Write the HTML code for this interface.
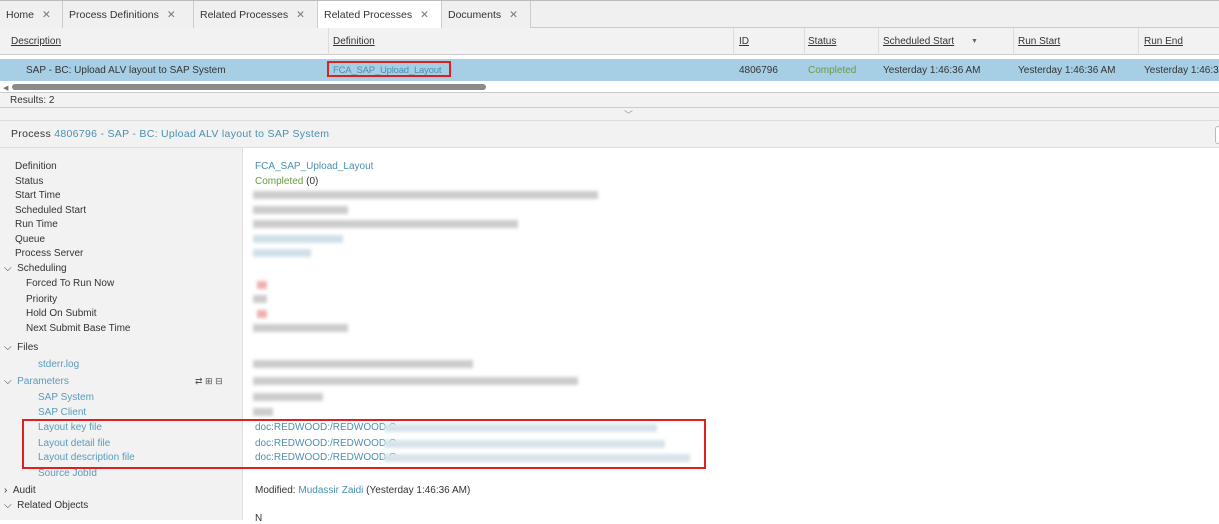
<!DOCTYPE html>
<html><head><style>
*{box-sizing:border-box;margin:0;padding:0}
body{width:1219px;height:520px;overflow:hidden;background:#fff;font-family:"Liberation Sans",sans-serif;font-size:10px;color:#333;position:relative}
.a{position:absolute;white-space:nowrap}
.tab{position:absolute;top:1px;height:27px;border-right:1px solid #ccc;background:#f0f0f0;padding:8px 6px 0 6px;font-size:10.5px;color:#333}
.tab span{margin-left:8px;color:#777}
.hd{position:absolute;top:36px;font-size:10px;text-decoration:underline;color:#333}
.lnk{color:#4a90b0}
.bl{position:absolute;height:8px;background:#ccc;filter:blur(1.5px)}
.lbl{position:absolute;left:15px;font-size:10px;color:#333}
.sub{left:26px}
.p{left:38px;color:#5a9bbd}
</style></head><body>
<div class="a" style="left:0;top:0;width:1219px;height:28px;background:#f0f0f0;border-top:1px solid #bbb;border-bottom:1px solid #ccc"></div>
<div class="tab" style="left:0;width:63px">Home<span>✕</span></div>
<div class="tab" style="left:63px;width:131px">Process Definitions<span>✕</span></div>
<div class="tab" style="left:194px;width:124px">Related Processes<span>✕</span></div>
<div class="tab" style="left:318px;width:124px;background:#fff">Related Processes<span>✕</span></div>
<div class="tab" style="left:442px;width:89px">Documents<span>✕</span></div>
<div class="a" style="left:0;top:28px;width:1219px;height:27px;background:#f2f2f2;border-bottom:1px solid #ccc"></div>
<div class="a" style="left:328px;top:28px;width:1px;height:27px;background:#ddd"></div>
<div class="a" style="left:733px;top:28px;width:1px;height:27px;background:#ddd"></div>
<div class="a" style="left:804px;top:28px;width:1px;height:27px;background:#ddd"></div>
<div class="a" style="left:878px;top:28px;width:1px;height:27px;background:#ddd"></div>
<div class="a" style="left:1013px;top:28px;width:1px;height:27px;background:#ddd"></div>
<div class="a" style="left:1138px;top:28px;width:1px;height:27px;background:#ddd"></div>
<div class="hd" style="left:11px">Description</div>
<div class="hd" style="left:333px">Definition</div>
<div class="hd" style="left:739px">ID</div>
<div class="hd" style="left:808px">Status</div>
<div class="hd" style="left:883px">Scheduled Start</div><div class="a" style="left:971px;top:38px;font-size:7px;color:#666">▼</div>
<div class="hd" style="left:1018px">Run Start</div>
<div class="hd" style="left:1144px">Run End</div>
<div class="a" style="left:0;top:59px;width:1219px;height:22px;background:#a6cfe5"></div>
<div class="a" style="left:26px;top:65px">SAP - BC: Upload ALV layout to SAP System</div>
<div class="a lnk" style="left:327px;top:61px;width:124px;height:16px;border:2px solid #e02020;padding:2px 0 0 4px;font-size:9.5px;letter-spacing:-.2px;overflow:hidden">FCA_SAP_Upload_Layout</div>
<div class="a" style="left:739px;top:65px">4806796</div>
<div class="a" style="left:808px;top:65px;color:#6a9a40">Completed</div>
<div class="a" style="left:883px;top:65px">Yesterday 1:46:36 AM</div>
<div class="a" style="left:1018px;top:65px">Yesterday 1:46:36 AM</div>
<div class="a" style="left:1144px;top:65px">Yesterday 1:46:38</div>
<div class="a" style="left:0;top:81px;width:1219px;height:12px;background:#fff;border-bottom:1px solid #ccc"></div>
<div class="a" style="left:3px;top:84px;font-size:7px;color:#777">◀</div>
<div class="a" style="left:12px;top:84px;width:474px;height:6px;background:#8a8a8a;border-radius:3px"></div>
<div class="a" style="left:0;top:93px;width:1219px;height:15px;background:#f2f2f2;border-bottom:1px solid #ccc"></div>
<div class="a" style="left:10px;top:95px">Results: 2</div>
<div class="a" style="left:0;top:108px;width:1219px;height:13px;background:#f2f2f2;border-bottom:1px solid #ddd"></div>
<div class="a" style="left:624px;top:108px;font-size:9px;color:#999">﹀</div>
<div class="a" style="left:0;top:121px;width:1219px;height:27px;background:#f2f2f2;border-bottom:1px solid #ddd"></div>
<div class="a" style="left:11px;top:128px;font-size:10.5px;letter-spacing:.3px">Process <span class="lnk">4806796 - SAP - BC: Upload ALV layout to SAP System</span></div>
<div class="a" style="left:1215px;top:126px;width:8px;height:18px;border:1px solid #bbb;border-radius:3px;background:#fff"></div>
<div class="a" style="left:0;top:148px;width:243px;height:372px;background:#f2f2f2;border-right:1px solid #ddd"></div>
<div class="lbl" style="top:161px">Definition</div>
<div class="lbl" style="top:176px">Status</div>
<div class="lbl" style="top:190px">Start Time</div>
<div class="lbl" style="top:205px">Scheduled Start</div>
<div class="lbl" style="top:219px">Run Time</div>
<div class="lbl" style="top:234px">Queue</div>
<div class="lbl" style="top:248px">Process Server</div>
<div class="lbl" style="top:263px;left:4px">⌵ &nbsp;Scheduling</div>
<div class="lbl sub" style="top:278px">Forced To Run Now</div>
<div class="lbl sub" style="top:294px">Priority</div>
<div class="lbl sub" style="top:308px">Hold On Submit</div>
<div class="lbl sub" style="top:323px">Next Submit Base Time</div>
<div class="lbl" style="top:342px;left:4px">⌵ &nbsp;Files</div>
<div class="lbl p" style="top:359px">stderr.log</div>
<div class="lbl" style="top:376px;left:4px">⌵ &nbsp;<span style="color:#5a9bbd">Parameters</span></div>
<div class="a" style="left:195px;top:376px;font-size:9px;color:#555">⇄ ⊞ ⊟</div>
<div class="lbl p" style="top:392px">SAP System</div>
<div class="lbl p" style="top:407px">SAP Client</div>
<div class="lbl p" style="top:422px">Layout key file</div>
<div class="lbl p" style="top:438px">Layout detail file</div>
<div class="lbl p" style="top:452px">Layout description file</div>
<div class="lbl p" style="top:468px">Source JobId</div>
<div class="lbl" style="top:485px;left:4px">› &nbsp;Audit</div>
<div class="lbl" style="top:500px;left:4px">⌵ &nbsp;Related Objects</div>
<div class="a lnk" style="left:255px;top:161px">FCA_SAP_Upload_Layout</div>
<div class="a" style="left:255px;top:176px;color:#6a9a40">Completed <span style="color:#333">(0)</span></div>
<div class="bl" style="left:253px;top:191px;width:345px"></div>
<div class="bl" style="left:253px;top:206px;width:95px"></div>
<div class="bl" style="left:253px;top:220px;width:265px"></div>
<div class="bl" style="left:253px;top:235px;width:90px;background:#cfe0ea"></div>
<div class="bl" style="left:253px;top:249px;width:58px;background:#cfe0ea"></div>
<div class="bl" style="left:257px;top:281px;width:10px;background:#f0b0b0"></div>
<div class="bl" style="left:253px;top:295px;width:14px"></div>
<div class="bl" style="left:257px;top:310px;width:10px;background:#f0b0b0"></div>
<div class="bl" style="left:253px;top:324px;width:95px"></div>
<div class="bl" style="left:253px;top:360px;width:220px"></div>
<div class="bl" style="left:253px;top:377px;width:325px"></div>
<div class="bl" style="left:253px;top:393px;width:70px"></div>
<div class="bl" style="left:253px;top:408px;width:20px"></div>
<div class="a lnk" style="left:255px;top:422px">doc:REDWOOD:/REDWOOD.C</div><div class="bl" style="left:384px;top:424px;width:273px;background:#d8e4ea"></div>
<div class="a lnk" style="left:255px;top:438px">doc:REDWOOD:/REDWOOD.C</div><div class="bl" style="left:384px;top:440px;width:281px;background:#d8e4ea"></div>
<div class="a lnk" style="left:255px;top:452px">doc:REDWOOD:/REDWOOD.C</div><div class="bl" style="left:384px;top:454px;width:306px;background:#d8e4ea"></div>
<div class="a" style="left:22px;top:419px;width:684px;height:50px;border:2px solid #e02020"></div>
<div class="a" style="left:255px;top:485px">Modified: <span class="lnk">Mudassir Zaidi</span> (Yesterday 1:46:36 AM)</div>
<div class="a" style="left:255px;top:513px">N</div>
</body></html>
